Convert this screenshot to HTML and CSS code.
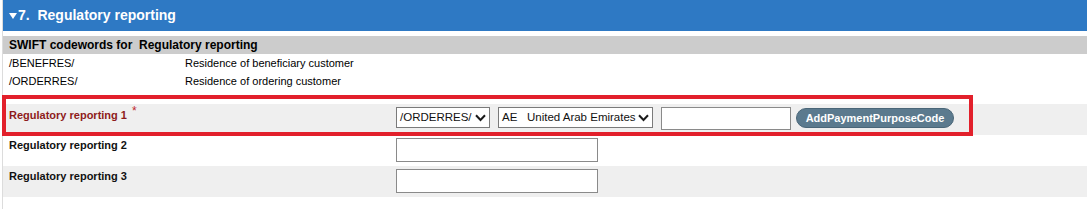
FILE: index.html
```html
<!DOCTYPE html>
<html>
<head>
<meta charset="utf-8">
<link rel="stylesheet" href="styles.css">
</head>
<body>
<div class="page">
  <div class="section-header"><span class="tri"></span>7.&nbsp; Regulatory reporting</div>
  <div class="codes-header">SWIFT codewords for&nbsp; Regulatory reporting</div>
  <div class="code-row"><span class="code">/BENEFRES/</span><span class="desc">Residence of beneficiary customer</span></div>
  <div class="code-row"><span class="code">/ORDERRES/</span><span class="desc">Residence of ordering customer</span></div>

  <div class="form">
    <div class="form-row grey highlighted">
      <div class="label required">Regulatory reporting 1 <span class="star">*</span></div>
      <div class="fields">
        <span class="sel sel-code">/ORDERRES/<svg class="chev" viewBox="0 0 11 8" width="11" height="8"><path d="M1 1.2 L5.5 6 L10 1.2" fill="none" stroke="#1a1a1a" stroke-width="2"/></svg></span>
        <span class="sel sel-country">AE&nbsp;&nbsp; United Arab Emirates<svg class="chev" viewBox="0 0 11 8" width="11" height="8"><path d="M1 1.2 L5.5 6 L10 1.2" fill="none" stroke="#1a1a1a" stroke-width="2"/></svg></span>
        <span class="txt txt-short"></span>
        <span class="btn">AddPaymentPurposeCode</span>
      </div>
      <div class="highlight"></div>
    </div>
    <div class="form-row">
      <div class="label">Regulatory reporting 2</div>
      <div class="fields"><span class="txt txt-long"></span></div>
    </div>
    <div class="form-row grey">
      <div class="label">Regulatory reporting 3</div>
      <div class="fields"><span class="txt txt-long"></span></div>
    </div>
  </div>
</div>
</body>
</html>
```

FILE: styles.css
```css
html, body {
  margin: 0;
  padding: 0;
  background: #fff;
}
body {
  font-family: "Liberation Sans", Arial, sans-serif;
  color: #000;
}
.page {
  margin-left: 2px;
  border-left: 1px solid #dcdcdc;
  min-height: 209px;
}
.section-header {
  height: 31px;
  line-height: 31px;
  background: #2e79c4;
  color: #fff;
  font-weight: bold;
  font-size: 14px;
  padding-left: 6px;
  display: flex;
  align-items: center;
}
.tri {
  width: 0;
  height: 0;
  border-left: 4px solid transparent;
  border-right: 4px solid transparent;
  border-top: 6px solid #fff;
  margin-right: 1px;
  margin-top: 1px;
}
.codes-header {
  margin-top: 5px;
  height: 18px;
  line-height: 18px;
  background: #cccccc;
  font-weight: bold;
  font-size: 12px;
  padding-left: 6px;
}
.code-row {
  display: flex;
  height: 18px;
  line-height: 18px;
  font-size: 11px;
  padding-left: 6px;
}
.code {
  width: 176px;
}
.form {
  margin-top: 14px;
}
.form-row {
  position: relative;
  display: flex;
  height: 31px;
  box-sizing: border-box;
  padding-top: 3px;
}
.form-row.grey {
  background: #efefef;
}
.label {
  width: 387px;
  padding-left: 6px;
  padding-top: 1px;
  font-size: 11px;
  font-weight: bold;
  color: #111;
}
.label.required {
  color: #8e1b1b;
}
.star {
  color: #c0282d;
  font-weight: normal;
  font-size: 12px;
  position: relative;
  top: -4px;
  margin-left: 2px;
}
.fields {
  display: flex;
  align-items: flex-start;
  gap: 8px;
}
.sel {
  position: relative;
  box-sizing: border-box;
  height: 21px;
  line-height: 19px;
  border: 1px solid #7a7a7a;
  background: #fff;
  font-size: 11.5px;
  padding-left: 3px;
  color: #111;
  white-space: nowrap;
}
.sel-code { width: 94px; }
.sel-country { width: 155px; }
.chev {
  position: absolute;
  right: 3px;
  top: 6px;
}
.txt {
  display: block;
  box-sizing: border-box;
  border: 1px solid #8a8a8a;
  background: #fff;
}
.txt-short {
  width: 130px;
  height: 23px;
}
.txt-long {
  width: 202px;
  height: 24px;
}
.btn {
  margin-left: -3px;
  margin-top: 1px;
  box-sizing: border-box;
  width: 158px;
  height: 20px;
  line-height: 18px;
  border: 1px solid #4a6678;
  border-radius: 10px;
  background: #5b7a8e;
  color: #fff;
  font-weight: bold;
  font-size: 11px;
  text-align: center;
}
.highlight {
  position: absolute;
  left: -1px;
  top: -9px;
  width: 971px;
  height: 41px;
  box-sizing: border-box;
  border: 4px solid #e2202b;
  pointer-events: none;
}
```
